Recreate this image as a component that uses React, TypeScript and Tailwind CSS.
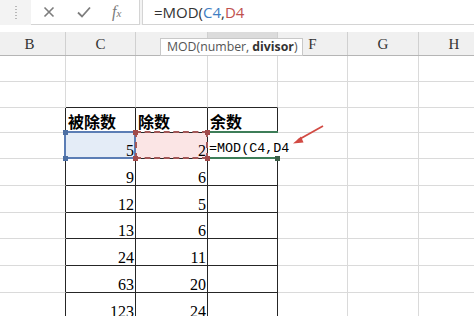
import React from "react";

// --- Sheet data ---------------------------------------------------------------

const COLS = ["B", "C", "D", "E", "F", "G", "H"];
const COL_W = [72, 70, 72, 70, 70, 71, 71];
const ROW_H = [26, 26, 25, 26, 27, 27, 26, 27, 27, 27];

const DIVIDENDS = [5, 9, 12, 13, 24, 63, 123];
const DIVISORS = [2, 6, 5, 6, 11, 20, 24];

const GRID = "#dadada";
const INK = "#262626";

function cellValue(r: number, c: number): React.ReactNode {
  if (r === 2) {
    if (c === 1) return "被除数";
    if (c === 2) return "除数";
    if (c === 3) return "余数";
    return null;
  }
  if (r >= 3) {
    const i = r - 3;
    if (c === 1 && DIVIDENDS[i] !== undefined) return DIVIDENDS[i];
    if (c === 2 && DIVISORS[i] !== undefined) return DIVISORS[i];
  }
  return null;
}

// --- Formula bar --------------------------------------------------------------

function FormulaBar() {
  return (
    <div className="flex h-[25px] bg-[#f3f3f3]">
      <div className="flex w-[31px] flex-col items-center justify-center gap-[2px]">
        {[0, 1, 2, 3, 4].map((i) => (
          <span key={i} className="block h-[1px] w-[2px] bg-[#b8b8b8]" />
        ))}
      </div>
      <div className="flex w-[109px] items-center border-b border-r border-[#d4d4d4] bg-white text-[#7a7a7a]">
        <svg width="14" height="14" viewBox="0 0 14 14" className="ml-[11px]">
          <path d="M2.5 2.5l9 9M11.5 2.5l-9 9" stroke="#7d7d7d" strokeWidth="1.6" fill="none" />
        </svg>
        <svg width="16" height="14" viewBox="0 0 16 14" className="ml-[20px]">
          <path d="M2 7.5l4 4 8-9" stroke="#7d7d7d" strokeWidth="1.8" fill="none" />
        </svg>
        <span
          className="ml-[20px] text-[16px] italic leading-none text-[#7a7a7a]"
          style={{ fontFamily: '"Liberation Serif", serif' }}
        >
          f<span className="text-[11px]">x</span>
        </span>
      </div>
      <div className="w-[2px]" />
      <div
        className="flex flex-1 items-center border-b border-l border-[#d4d4d4] bg-white pl-[11px] text-[15px] text-[#333]"
        style={{ fontFamily: '"Open Sans", sans-serif' }}
      >
        =MOD(<span className="text-[#3f7ec2]">C4</span>,<span className="text-[#c0504d]">D4</span>
      </div>
    </div>
  );
}

// --- Column header ------------------------------------------------------------

function ColumnHeader() {
  return (
    <div className="mt-[7px] ml-[-6px] flex h-[24px] border-b border-[#b5b5b5] bg-[#f0f0f0]">
      {COLS.map((c, i) => (
        <div
          key={c}
          className={`flex shrink-0 items-center justify-center border-r border-[#d0d0d0] pt-[2px] text-[15px] text-[#333] ${
            i === 3 ? "bg-[#dcdcdc]" : ""
          }`}
          style={{ width: COL_W[i], fontFamily: '"Liberation Serif", serif' }}
        >
          {/* D and E sit under the function hint */}
          {i === 2 || i === 3 ? null : c}
        </div>
      ))}
    </div>
  );
}

// --- Grid ---------------------------------------------------------------------

function Grid() {
  return (
    <div className="ml-[-6px] flex flex-col">
      {ROW_H.map((h, r) => (
        <div key={r} className="flex" style={{ height: h }}>
          {COLS.map((_, c) => {
            const rightInk = c <= 3 && r >= 2;
            const bottomInk = c >= 1 && c <= 3 && r >= 1;
            const v = cellValue(r, c);
            const isHead = r === 2;
            let bg = "";
            if (r === 3 && c === 1) bg = "bg-[#e4ecf7]";
            if (r === 3 && c === 2) bg = "bg-[#fbe5e5]";
            return (
              <div
                key={c}
                className={`flex shrink-0 items-end border-b border-r ${bg} ${
                  isHead ? "justify-start pl-[2px]" : "justify-end pr-[1px]"
                }`}
                style={{
                  width: COL_W[c],
                  borderRightColor: rightInk ? INK : GRID,
                  borderBottomColor: bottomInk ? INK : GRID,
                }}
              >
                {v !== null &&
                  (isHead ? (
                    <span
                      className="relative z-10 text-[16px] font-bold leading-[22px] text-black"
                      style={{ fontFamily: '"Noto Sans CJK SC", sans-serif' }}
                    >
                      {v}
                    </span>
                  ) : (
                    <span
                      className="relative z-10 text-[16px] leading-[15px] text-black"
                      style={{ fontFamily: '"Liberation Serif", serif' }}
                    >
                      {v}
                    </span>
                  ))}
              </div>
            );
          })}
        </div>
      ))}
    </div>
  );
}

// --- Selection marks over the grid -------------------------------------------

function Handle({ x, y, color }: { x: number; y: number; color: string }) {
  return (
    <span
      className="absolute h-[5px] w-[5px]"
      style={{ left: x - 2, top: y - 2, backgroundColor: color }}
    />
  );
}

function Selections() {
  return (
    <>
      {/* C4 reference range */}
      <div className="absolute left-[64px] top-[131px] h-[28px] w-[72px] border-2 border-[#5b7db5]" />
      {/* D4 reference range */}
      <div className="absolute left-[135px] top-[131px] h-[28px] w-[73px] border-2 border-dashed border-[#a35858]" />
      {/* E4 cell editor */}
      <div
        className="absolute left-[209px] top-[133px] flex h-[24px] w-[84px] items-end bg-white pb-[1px] text-[13.4px] leading-[15px] text-black"
        style={{ fontFamily: '"Liberation Mono", monospace' }}
      >
        =MOD(C4,D4
      </div>
      <div className="absolute left-[207px] top-[131px] h-[2px] w-[71px] bg-[#3d7d58]" />
      <div className="absolute left-[207px] top-[157px] h-[2px] w-[71px] bg-[#3d7d58]" />
      <Handle x={65} y={132} color="#4d6fa3" />
      <Handle x={65} y={158} color="#4d6fa3" />
      <Handle x={135} y={132} color="#a04a4a" />
      <Handle x={135} y={158} color="#a04a4a" />
      <Handle x={207} y={132} color="#a04a4a" />
      <Handle x={207} y={158} color="#a04a4a" />
      <Handle x={277} y={158} color="#3a5e48" />
      {/* Red arrow */}
      <svg className="absolute left-[286px] top-[120px]" width="44" height="30" viewBox="0 0 44 30">
        <path d="M37 6L12 20" stroke="#d24a43" strokeWidth="1.8" fill="none" />
        <path d="M7 23.5L15 16.5L17.5 22.5Z" fill="#d24a43" />
      </svg>
    </>
  );
}

// --- Function hint tooltip ----------------------------------------------------

function Tooltip() {
  return (
    <div
      className="absolute left-[160px] top-[38px] flex h-[18px] items-center whitespace-nowrap border border-[#c8c8c8] bg-white pl-[6px] pr-[4px] text-[12.3px] leading-none text-[#555]"
      style={{ fontFamily: '"Open Sans", sans-serif' }}
    >
      MOD(number,<span className="ml-[3px] font-bold text-[#333]">divisor</span>)
    </div>
  );
}

export default function App() {
  return (
    <div className="relative h-[316px] w-[474px] overflow-hidden bg-white">
      <FormulaBar />
      <ColumnHeader />
      <Grid />
      <Selections />
      <Tooltip />
    </div>
  );
}
